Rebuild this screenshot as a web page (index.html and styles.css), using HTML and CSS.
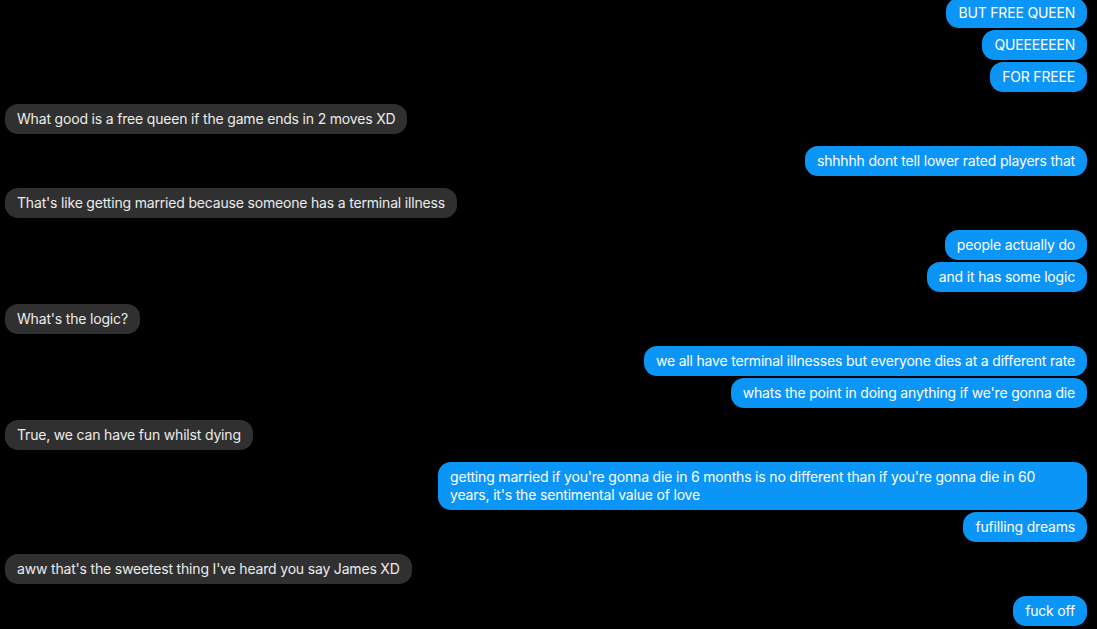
FILE: index.html
```html
<!DOCTYPE html>
<html lang="en">
<head>
    <meta name="viewport" content="width=device-width, initial-scale=1.0" charset="UTF-8">
    <title>Chat</title>
    <link rel="stylesheet" href="styles.css">
</head>
<body>
    <div class="chat">

        <!-- their messages are grey, ours are blue -->
        <div class="group me">
            <div class="bubble">BUT FREE QUEEN</div>
            <div class="bubble">QUEEEEEEN</div>
            <div class="bubble">FOR FREEE</div>
        </div>

        <div class="group them">
            <div class="bubble">What good is a free queen if the game ends in 2 moves XD</div>
        </div>

        <div class="group me">
            <div class="bubble">shhhhh dont tell lower rated players that</div>
        </div>

        <div class="group them">
            <div class="bubble">That's like getting married because someone has a terminal illness</div>
        </div>

        <div class="group me">
            <div class="bubble">people actually do</div>
            <div class="bubble">and it has some logic</div>
        </div>

        <div class="group them">
            <div class="bubble">What's the logic?</div>
        </div>

        <div class="group me">
            <div class="bubble">we all have terminal illnesses but everyone dies at a different rate</div>
            <div class="bubble">whats the point in doing anything if we're gonna die</div>
        </div>

        <div class="group them">
            <div class="bubble">True, we can have fun whilst dying</div>
        </div>

        <div class="group me">
            <div class="bubble">getting married if you're gonna die in 6 months is no different than if you're gonna die in 60 years, it's the sentimental value of love</div>
            <div class="bubble">fufilling dreams</div>
        </div>

        <div class="group them">
            <div class="bubble">aww that's the sweetest thing I've heard you say James XD</div>
        </div>

        <div class="group me">
            <div class="bubble">fuck off</div>
        </div>

    </div>
</body>
</html>
```

FILE: styles.css
```css
html, body {
    margin: 0;
    height: 100%;
    background-color: #000;
    overflow: hidden;
}

/* chat sits at the bottom, older messages scroll off the top */
.chat {
    height: 100%;
    box-sizing: border-box;
    display: flex;
    flex-direction: column;
    justify-content: flex-end;
    gap: 12px;
    padding: 0 10px 3px 5px;
    font-family: 'Inter', 'Noto Sans', sans-serif;
    font-size: 14px;
    line-height: 18px;
    letter-spacing: -0.18px;
}

.group {
    display: flex;
    flex-direction: column;
    gap: 2px;
}

.me {
    align-items: flex-end;
}

.them {
    align-items: flex-start;
}

.bubble {
    padding: 6px 12px;
    border-radius: 13px;
    max-width: 625px;
    flex-shrink: 0;
}

.me .bubble {
    background-color: #0b95f7;
    color: #fff;
}

.them .bubble {
    background-color: #303030;
    color: #ececec;
}
```
